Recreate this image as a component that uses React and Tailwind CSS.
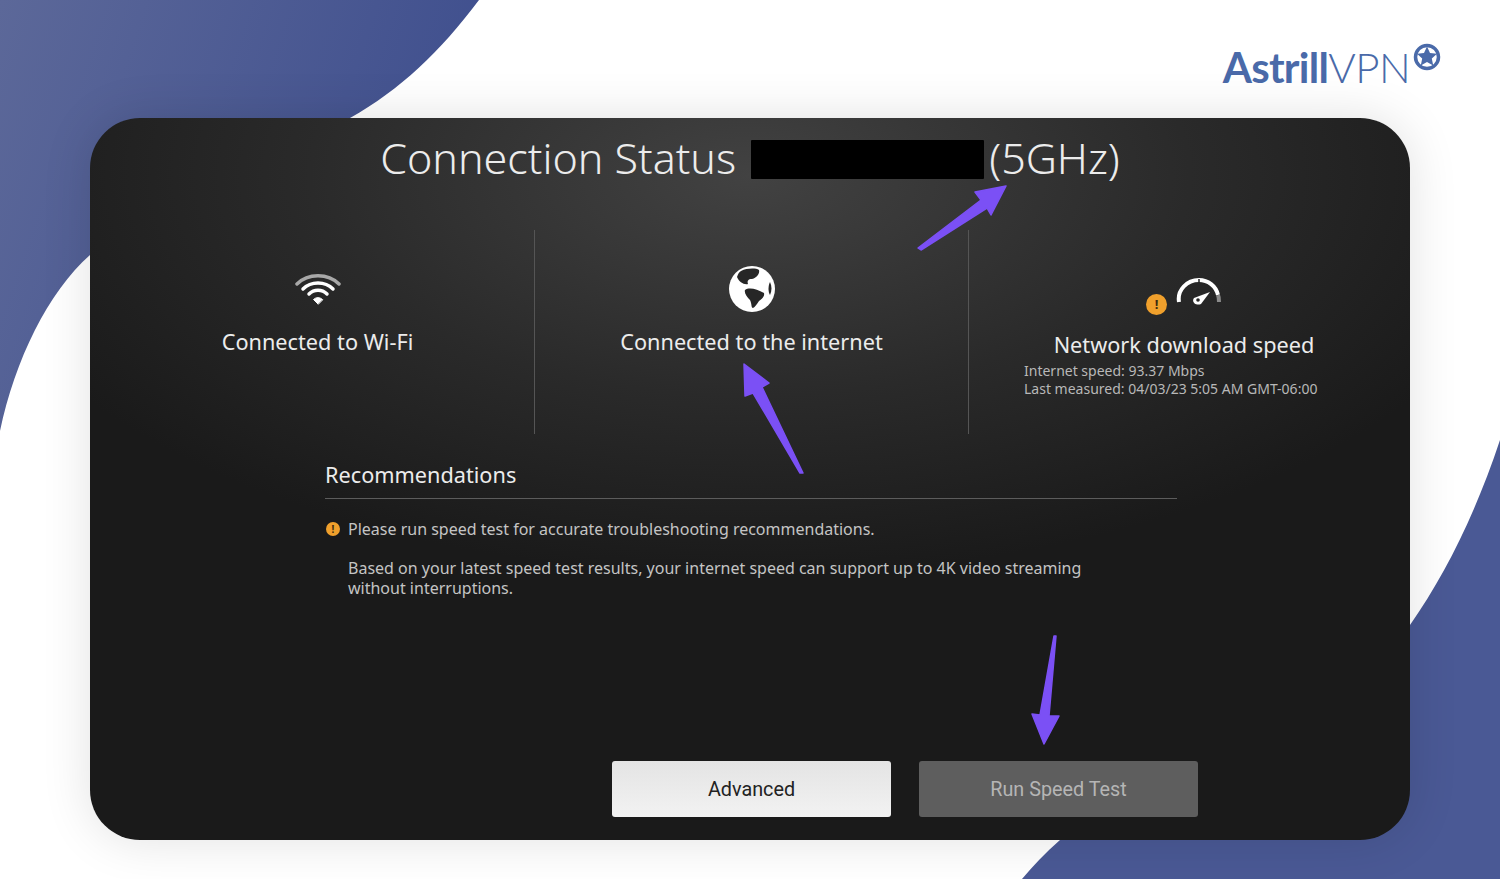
const sans = { fontFamily: '"Noto Sans", sans-serif' };

function Backdrop() {
  return (
    <svg className="absolute inset-0" width="1500" height="879" viewBox="0 0 1500 879">
      <defs>
        <linearGradient id="blob" x1="0" y1="0" x2="1" y2="0.3">
          <stop offset="0" stopColor="#5c6899" />
          <stop offset="1" stopColor="#3f4f8e" />
        </linearGradient>
      </defs>
      <path d="M0 0H479C440 52 400 90 350 118L90 255C48 292 15 360 0 431Z" fill="url(#blob)" />
      <path d="M1500 440C1475 515 1445 575 1410 625L1200 700L1060 840C1045 853 1033 866 1022 879H1500Z" fill="#4a5995" />
    </svg>
  );
}

function Logo() {
  return (
    <div className="flex items-start text-[#4a6aa9] mr-[59px] mt-[43px]" style={{ fontFamily: 'Lato, sans-serif' }}>
      <span className="text-[42px] leading-[48px] font-bold tracking-[-0.7px]">Astrill</span>
      <span className="text-[42px] leading-[48px] font-light tracking-[-0.6px]">VPN</span>
      <svg width="28" height="28" viewBox="0 0 28 28" className="ml-[3px]">
        <circle cx="14" cy="14" r="11.500" fill="none" stroke="#4a6aa9" strokeWidth="3.500" />
        <path d="M14 3.500l3 6.500 7 .8-5.200 4.800 1.400 6.900L14 19l-6.200 3.500 1.400-6.900L4 10.800l7-.8z" fill="#4a6aa9" />
      </svg>
    </div>
  );
}

function WifiIcon() {
  return (
    <svg width="46" height="34" viewBox="0 0 46 34" fill="none" strokeLinecap="round">
      <path d="M2 12C13 1 33 1 44 12" stroke="#a8a8a8" strokeWidth="3.500" />
      <path d="M8 17C16 9 30 9 38 17" stroke="#fff" strokeWidth="3.500" />
      <path d="M14 22C19 17 27 17 32 22" stroke="#fff" strokeWidth="3.500" />
      <path d="M23 32l-4.500-4.500C21 25 25 25 27.500 27.500z" fill="#fff" stroke="#fff" strokeLinejoin="round" />
    </svg>
  );
}

function GlobeIcon() {
  return (
    <svg width="46" height="46" viewBox="0 0 46 46">
      <circle cx="23" cy="23" r="23" fill="#fff" />
      <path d="M12 5C18 2 27 2 30 4C31 7 28 12 23 13C19 13 18 15 19 18C15 19 10 16 8 11C9 8 10 6 12 5Z" fill="#262626" />
      <path d="M16 24C20 21 28 23 35 27C36 31 32 33 30 35C28 38 26 41 24 42C22 42 23 38 21 34C18 31 15 27 16 24Z" fill="#262626" />
      <path d="M41 16C43 20 43 25 41 29C39 26 39 20 41 16Z" fill="#262626" />
    </svg>
  );
}

function GaugeIcon() {
  return (
    <svg width="46" height="28" viewBox="0 0 46 28" fill="none">
      <path d="M3 25C1 13 11 3 23 3C32 3 40 9 42 18" stroke="#fff" strokeWidth="4" />
      <path d="M42 18C43 20 43 23 43 25" stroke="#8a8a8a" strokeWidth="4" />
      <path d="M23 2V6" stroke="#262626" strokeWidth="1.500" />
      <path d="M34 15L25 27C20 29 15 25 18 21Z" fill="#fff" />
      <circle cx="22" cy="23" r="1.800" fill="#262626" />
    </svg>
  );
}

function WarnDot({ size }) {
  return (
    <span
      className={`flex items-center justify-center rounded-full bg-[#f0a02c] text-[#3a2a10] font-bold leading-none shrink-0 ${size === 'lg' ? 'w-[21px] h-[21px] text-[13px] mt-[17px]' : 'w-[14px] h-[14px] text-[10px] ml-[1px]'}`}
      style={sans}
    >
      !
    </span>
  );
}

function Arrows() {
  return (
    <svg className="absolute inset-0 pointer-events-none" width="1500" height="879" viewBox="0 0 1500 879" fill="#7b50f5" stroke="#7b50f5" strokeWidth="1.500" strokeLinejoin="round">
      <path d="M1006 186L975 192L981 200L918 248L921 250L987 208L991 215Z" />
      <path d="M744 364L769 383L762 387L803 473L800 473L753 393L745 396Z" />
      <path d="M1056 636L1049 716L1059 716L1044 744L1032 714L1040 715L1054 636Z" />
    </svg>
  );
}

export default function App() {
  return (
    <div className="relative w-[1500px] h-[879px] overflow-hidden bg-white" style={sans}>
      <Backdrop />
      <div className="relative flex flex-col h-full">
        <header className="h-[118px] flex justify-end shrink-0">
          <Logo />
        </header>
        <main className="ml-[90px] w-[1320px] h-[722px] rounded-[50px] shadow-[0_0_50px_rgba(0,0,0,0.12)] bg-[radial-gradient(ellipse_800px_400px_at_50%_8%,#424242_0%,#2a2a2a_55%,#1a1a1a_100%)] flex flex-col text-[#ececec]">
          <h1 className="flex items-center justify-center h-[82px] text-[43px] font-light leading-none">
            <span className="pb-[4px]">Connection Status</span>
            <span className="w-[233px] h-[39px] bg-black ml-[15px] mr-[5px] rounded-[1px]" />
            <span className="pb-[4px]">(5GHz)</span>
          </h1>

          <div className="mt-[30px] ml-[11px] grid grid-cols-[434px_434px_430px] h-[204px]">
            <div className="flex flex-col items-center pt-[42px] border-r border-[#555]">
              <WifiIcon />
              <p className="mt-[22px] text-[21.700px] leading-[28px]">Connected to Wi-Fi</p>
            </div>
            <div className="flex flex-col items-center pt-[36px] border-r border-[#555]">
              <GlobeIcon />
              <p className="mt-[16px] text-[21.700px] leading-[28px]">Connected to the internet</p>
            </div>
            <div className="flex flex-col items-center pt-[47px]">
              <div className="flex items-start gap-[9px]">
                <WarnDot size="lg" />
                <GaugeIcon />
              </div>
              <p className="mt-[16px] text-[21.700px] leading-[28px]">Network download speed</p>
              <div className="mt-[3px] self-start ml-[55px] text-[14px] leading-[18px] text-[#b8b8b8] whitespace-nowrap">
                <p>Internet speed: 93.37 Mbps</p>
                <p>Last measured: 04/03/23 5:05 AM GMT-06:00</p>
              </div>
            </div>
          </div>

          <section className="ml-[235px] w-[852px] mt-[26px]">
            <h2 className="text-[21.700px] leading-[30px] pb-[8px] border-b border-[#5c5c5c]">Recommendations</h2>
            <div className="mt-[20px] flex items-center gap-[8px] text-[16px] leading-[20px] text-[#c4c4c4]">
              <WarnDot />
              <p>Please run speed test for accurate troubleshooting recommendations.</p>
            </div>
            <p className="mt-[19px] ml-[23px] w-[760px] text-[16px] leading-[20px] text-[#c4c4c4]">
              Based on your latest speed test results, your internet speed can support up to 4K video streaming without interruptions.
            </p>
          </section>

          <div className="mt-auto mb-[23px] ml-[522px] flex gap-[28px]" style={{ fontFamily: 'Roboto, sans-serif' }}>
            <button className="w-[279px] h-[56px] pt-[2px] rounded-[3px] bg-gradient-to-b from-[#e4e4e4] to-[#f2f2f2] text-[#222] text-[19.800px]">Advanced</button>
            <button className="w-[279px] h-[56px] pt-[2px] rounded-[3px] bg-[#5e5e5e] text-[#b5b5b5] text-[19.800px]">Run Speed Test</button>
          </div>
        </main>
      </div>
      <Arrows />
    </div>
  );
}
